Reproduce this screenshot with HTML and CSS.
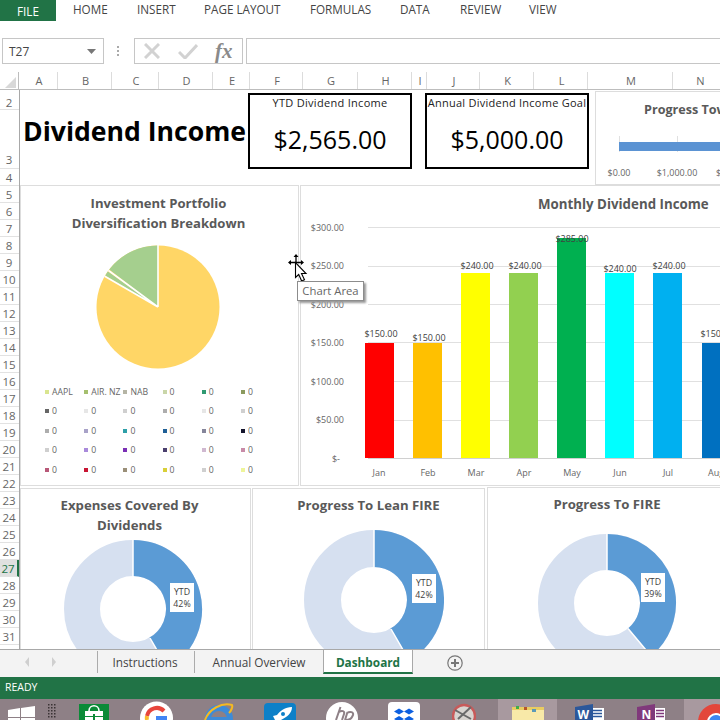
FILE: index.html
```html
<!DOCTYPE html>
<html lang="en">
<head>
<meta charset="utf-8">
<title>Dividend Income Dashboard</title>
<link rel="stylesheet" href="styles.css">
</head>
<body>
<div class="app">
  <nav class="ribbon">
    <span class="file-tab">FILE</span>
    <span class="rtab t-home">HOME</span>
    <span class="rtab t-insert">INSERT</span>
    <span class="rtab t-page">PAGE LAYOUT</span>
    <span class="rtab t-form">FORMULAS</span>
    <span class="rtab t-data">DATA</span>
    <span class="rtab t-review">REVIEW</span>
    <span class="rtab t-view">VIEW</span>
  </nav>
  <div class="formula-bar">
    <div class="name-box"><span>T27</span><svg class="caret" width="9" height="5" viewBox="0 0 9 5"><path d="M0 0h9L4.500 5z"/></svg></div>
    <svg class="grip" width="3" height="12" viewBox="0 0 3 12"><path d="M0 1h2v2H0zM0 5h2v2H0zM0 9h2v2H0z"/></svg>
    <div class="fx-box">
      <svg width="16" height="16" viewBox="0 0 16 16"><path d="M1 1l14 14M15 1L1 15" class="fx-x"/></svg>
      <svg width="20" height="16" viewBox="0 0 20 16"><path d="M1 9l6 6L19 2" class="fx-x"/></svg>
      <span class="fx-label">fx</span>
    </div>
    <div class="fx-input"></div>
  </div>
  <div class="col-head">
    <div class="corner"><svg width="11" height="11" viewBox="0 0 11 11"><path d="M11 0v11H0z"/></svg></div>
    <span class="col c-a">A</span><span class="col c-b">B</span><span class="col c-c">C</span><span class="col c-d">D</span><span class="col c-e">E</span><span class="col c-f">F</span><span class="col c-g">G</span><span class="col c-h">H</span><span class="col c-i">I</span><span class="col c-j">J</span><span class="col c-k">K</span><span class="col c-l">L</span><span class="col c-m">M</span><span class="col c-n">N</span>
  </div>
  <div class="sheet-wrap">
    <div class="row-head">
      <span class="row r-2">2</span><span class="row r-3">3</span><span class="row">4</span><span class="row">5</span><span class="row">6</span><span class="row">7</span><span class="row">8</span><span class="row">9</span><span class="row">10</span><span class="row">11</span><span class="row">12</span><span class="row">13</span><span class="row">14</span><span class="row">15</span><span class="row">16</span><span class="row">17</span><span class="row">18</span><span class="row">19</span><span class="row">20</span><span class="row">21</span><span class="row">22</span><span class="row">23</span><span class="row">24</span><span class="row">25</span><span class="row">26</span><span class="row sel">27</span><span class="row">28</span><span class="row">29</span><span class="row">30</span><span class="row">31</span>
    </div>
    <main class="canvas">
      <h1 class="main-title">Dividend Income</h1>
      <section class="kpi kpi-ytd"><h2>YTD Dividend Income</h2><p>$2,565.00</p></section>
      <section class="kpi kpi-goal"><h2>Annual Dividend Income Goal</h2><p>$5,000.00</p></section>

      <section class="chart ch-progress">
        <svg width="140" height="94" viewBox="0 0 140 94">
          <text class="ttl ttl-s" x="48" y="22">Progress Towards</text>
          <path class="grid" d="M23.500 44v16M81.500 44v16"/>
          <rect x="23" y="50" width="117" height="9" fill="#5b93d3"/>
          <text class="tick" x="23" y="84" text-anchor="middle">$0.00</text>
          <text class="tick" x="81" y="84" text-anchor="middle">$1,000.00</text>
          <text class="tick" x="120" y="84">$2,000.00</text>
        </svg>
      </section>

      <section class="chart ch-pie">
        <h3>Investment Portfolio<br>Diversification Breakdown</h3>
        <svg class="pie" width="124" height="124" viewBox="-62 -62 124 124">
          <circle r="61.500" fill="#ffd666"/>
          <path d="M0 0L-50.200-35.500A61.500 61.500 0 0 1-52.800-31.500z" fill="#a5cf8e"/>
          <path d="M0 0L-48.700-37.600A61.500 61.500 0 0 1 0-61.500z" fill="#a5cf8e"/>
          <path d="M0 0L-49.500-36.500M0 0L-53.300-30.700M0 0V-62" stroke="#fff" stroke-width="1.600" fill="none"/>
        </svg>
        <ul class="legend">
          <li class="wide"><i class="k1"></i>AAPL</li><li class="wide"><i class="k2"></i>AIR. NZ</li><li class="wide"><i class="k3"></i>NAB</li><li><i class="k4"></i>0</li><li><i class="k5"></i>0</li><li><i class="k6"></i>0</li>
          <li><i class="k7"></i>0</li><li><i class="k8"></i>0</li><li><i class="k9"></i>0</li><li><i class="k10"></i>0</li><li><i class="k8"></i>0</li><li><i class="k9"></i>0</li>
          <li><i class="k10"></i>0</li><li><i class="k11"></i>0</li><li><i class="k12"></i>0</li><li><i class="k13"></i>0</li><li><i class="k14"></i>0</li><li><i class="k15"></i>0</li>
          <li><i class="k9"></i>0</li><li><i class="k16"></i>0</li><li><i class="k17"></i>0</li><li><i class="k18"></i>0</li><li><i class="k19"></i>0</li><li><i class="k20"></i>0</li>
          <li><i class="k21"></i>0</li><li><i class="k22"></i>0</li><li><i class="k23"></i>0</li><li><i class="k24"></i>0</li><li><i class="k9"></i>0</li><li><i class="k25"></i>0</li>
        </ul>
      </section>

      <section class="chart ch-bars">
        <svg width="420" height="300" viewBox="0 0 420 300">
          <text class="ttl" x="237" y="23">Monthly Dividend Income</text>
          <path class="grid" d="M67 41.500H420M67 80.500H420M67 118.500H420M67 156.500H420M67 195.500H420M67 234.500H420"/>
          <path class="axis" d="M67 272.500H420"/>
          <g class="ylab" text-anchor="end">
            <text x="43" y="45">$300.00</text><text x="43" y="83">$250.00</text><text x="43" y="122">$200.00</text><text x="43" y="160">$150.00</text><text x="43" y="199">$100.00</text><text x="43" y="237">$50.00</text><text x="39" y="276">$-</text>
          </g>
          <rect x="64" y="157" width="29" height="115" fill="#ff0000"/>
          <rect x="112" y="157" width="29" height="115" fill="#ffc000"/>
          <rect x="160" y="87" width="29" height="185" fill="#ffff00"/>
          <rect x="208" y="87" width="29" height="185" fill="#92d050"/>
          <rect x="256" y="52" width="29" height="220" fill="#00b050"/>
          <rect x="304" y="87" width="29" height="185" fill="#00ffff"/>
          <rect x="352" y="87" width="29" height="185" fill="#00b0f0"/>
          <rect x="401" y="157" width="29" height="115" fill="#0070c0"/>
          <g class="dlab" text-anchor="middle">
            <text x="80" y="151">$150.00</text><text x="128" y="155">$150.00</text><text x="176" y="83">$240.00</text><text x="224" y="83">$240.00</text><text x="271" y="56">$285.00</text><text x="319" y="86">$240.00</text><text x="368" y="83">$240.00</text><text x="416" y="151">$150.00</text>
          </g>
          <g class="xlab" text-anchor="middle">
            <text x="78" y="290">Jan</text><text x="127" y="290">Feb</text><text x="175" y="290">Mar</text><text x="223" y="290">Apr</text><text x="271" y="290">May</text><text x="319" y="290">Jun</text><text x="367" y="290">Jul</text><text x="415" y="290">Aug</text>
          </g>
        </svg>
      </section>

      <section class="chart ch-d1">
        <h3>Expenses Covered By<br>Dividends</h3>
        <svg class="donut d-a" width="140" height="140" viewBox="-70 -70 140 140">
          <circle r="51" class="ring-bg"/>
          <path class="ring-fg" d="M0-51A51 51 0 0 1 25.500 44.200"/>
          <path class="ring-gap" d="M0-70V-33M17 29L36 62"/>
        </svg>
        <div class="tag t-d1">YTD<br>42%</div>
      </section>
      <section class="chart ch-d2">
        <h3>Progress To Lean FIRE</h3>
        <svg class="donut d-b" width="140" height="140" viewBox="-70 -70 140 140">
          <circle r="51.500" class="ring-bg"/>
          <path class="ring-fg" d="M0-51.500A51.500 51.500 0 0 1 25.700 44.600"/>
          <path class="ring-gap" d="M0-70V-33M17 29L36 62"/>
        </svg>
        <div class="tag t-d2">YTD<br>42%</div>
      </section>
      <section class="chart ch-d3">
        <h3>Progress To FIRE</h3>
        <svg class="donut d-c" width="140" height="140" viewBox="-70 -70 140 140">
          <circle r="51" class="ring-bg"/>
          <path class="ring-fg" d="M0-51A51 51 0 0 1 32.500 39.300"/>
          <path class="ring-gap" d="M0-70V-33M21 25.400L44 53"/>
        </svg>
        <div class="tag t-d3">YTD<br>39%</div>
      </section>

      <svg class="cursor" width="20" height="30" viewBox="0 0 20 30">
        <path d="M8 1.500V8M1.500 8.500H14" stroke="#000" stroke-width="1.300" fill="none"/>
        <path d="M8 0l2.500 3h-5zM0 8.500L3 6v5zM16 8.500L13 6v5z" fill="#000"/>
        <path d="M7.500 8.500v15l3.200-3 3 6.500 2.800-1.300-3-6.200H18z" fill="#fff" stroke="#000" stroke-width="1.100"/>
      </svg>
      <div class="tooltip">Chart Area</div>
    </main>
  </div>
  <div class="sheet-tabs">
    <svg class="nav-arrows" width="32" height="12" viewBox="0 0 32 12"><path d="M5 1L1 6l4 5zM28 1l4 5-4 5z"/></svg>
    <span class="stab s-first">Instructions</span>
    <span class="stab s-second">Annual Overview</span>
    <span class="stab active">Dashboard</span>
    <svg class="add" width="16" height="16" viewBox="0 0 16 16"><circle cx="8" cy="8" r="7.200"/><path d="M8 4v8M4 8h8"/></svg>
  </div>
  <footer class="status">READY</footer>
  <div class="taskbar">
    <svg class="w-win" width="40" height="21" viewBox="0 0 40 21"><path fill="#fff" d="M8 11l12-2v9H8zM21 9l14-2v11H21zM8 19h12v2H8zM21 19h14v2H21z"/></svg>
    <svg class="w-search" width="9" height="21" viewBox="0 0 9 21"><path fill="#3a3335" d="M1 5h1.500v1.500H1zM4 5h1.500v1.500H4zM7 5h1.500v1.500H7zM1 8h1.500v1.500H1zM4 8h1.500v1.500H4zM7 8h1.500v1.500H7zM1 11h1.500v1.500H1zM4 11h1.500v1.500H4zM7 11h1.500v1.500H7zM1 14h1.500v1.500H1zM4 14h1.500v1.500H4zM7 14h1.500v1.500H7zM1 17h1.500v1.500H1zM4 17h1.500v1.500H4zM7 17h1.500v1.500H7z"/></svg>
    <svg class="w-store" width="30" height="21" viewBox="0 0 30 21"><path fill="#0b8a37" d="M0 5h30v16H0z"/><path fill="none" stroke="#fff" stroke-width="1.600" d="M10 12c0-7 10-7 10 0"/><path fill="#fff" d="M6 12h18v9H6z"/><path fill="#0b8a37" d="M14 15h2v6h-2zM6 17h18v1H6z"/></svg>
    <svg class="w-g" width="33" height="21" viewBox="0 0 33 21"><circle cx="16.500" cy="19" r="16.500" fill="#fff"/><path d="M7 17a10 10 0 0 1 17-5" fill="none" stroke="#e8453c" stroke-width="4"/><path d="M7 17a10 10 0 0 0 0 4" fill="none" stroke="#f9bb2d" stroke-width="4"/><path fill="#4285f4" d="M16 17h11v4H16z"/></svg>
    <svg class="w-ie" width="30" height="21" viewBox="0 0 30 21"><circle cx="15" cy="20" r="11" fill="none" stroke="#3d8bd8" stroke-width="6"/><path fill="#3d8bd8" d="M6 18h18v3H6z"/><path d="M1 21C5 10 18 3 28 6c1 2-1 6-3 8" fill="none" stroke="#f5b921" stroke-width="2"/></svg>
    <svg class="w-rocket" width="32" height="21" viewBox="0 0 32 21"><path fill="#0d80c8" d="M4 4h24a4 4 0 0 1 4 4v13H0V8a4 4 0 0 1 4-4z"/><path fill="#fff" d="M28 8c-7 0-12 4-15 8l-4 1 2 4h6c6-3 11-7 11-13z"/><circle cx="19" cy="15" r="2" fill="#0d80c8"/></svg>
    <svg class="w-hp" width="32" height="21" viewBox="0 0 32 21"><circle cx="16" cy="19" r="16" fill="#fff"/><path d="M14.500 8L10 21M13 13c3-2 6-1 5 2l-2 6M21.500 13L19 21M21 14c3-2 7-1 6 2l-1 2c-1 2-3 3-6 3" stroke="#8e8086" stroke-width="2" fill="none"/></svg>
    <svg class="w-drop" width="32" height="21" viewBox="0 0 32 21"><path fill="#fff" d="M4 3h24a4 4 0 0 1 4 4v14H0V7a4 4 0 0 1 4-4z"/><path fill="#0d60e0" d="M11 9.500l5 3-5 3-5-3zM21 9.500l5 3-5 3-5-3zM11 17l5 3-5 3-5-3zM21 17l5 3-5 3-5-3z"/></svg>
    <svg class="w-snip" width="24" height="21" viewBox="0 0 24 21"><circle cx="12" cy="17" r="11" fill="#d8d4d0" stroke="#c85a5a" stroke-width="2.500"/><path d="M3 11l16 9M6 20l13-12" stroke="#6a6a6a" stroke-width="2"/></svg>
    <div class="cell-on c-folder"><svg width="32" height="21" viewBox="0 0 32 21"><path fill="#e9cc62" d="M0 8h32v13H0z"/><path fill="#f8e9a8" d="M0 11h32v10H0z"/><path fill="#3fae49" d="M4 7h3v3H4z"/><path fill="#b8562a" d="M12 8h3v3h-3z"/><path fill="#5b9ab8" d="M20 10h4v3h-4z"/></svg></div>
    <svg class="w-word" width="30" height="21" viewBox="0 0 30 21"><path fill="#fff" d="M17 9h12v12H17z"/><path stroke="#2b579a" stroke-width="1.300" d="M18 11.500h9M18 14.500h9M18 17.500h9"/><path fill="#2b579a" d="M0 8l18-3v16H0z"/><text x="2.500" y="20" class="ico-t">W</text></svg>
    <svg class="w-note" width="30" height="21" viewBox="0 0 30 21"><path fill="#fff" d="M17 9h11v12H17z"/><path stroke="#80397b" stroke-width="1.300" d="M19 11.500h8M19 14.500h8M19 17.500h8"/><path fill="#80397b" d="M0 8l18-3v16H0z"/><text x="4.500" y="20" class="ico-t">N</text></svg>
    <div class="cell-on c-chrome"><svg class="chrome" width="36" height="21" viewBox="0 0 36 21"><circle cx="32" cy="23" r="18" fill="#e3463b"/><path d="M32 23L15 21v20h17z" fill="#2fa24b"/><circle cx="32" cy="23" r="9" fill="#fff"/><circle cx="32" cy="23" r="7" fill="#3e86f0"/></svg></div>
  </div>
</div>
</body>
</html>
```
FILE: styles.css
```css
* { box-sizing: border-box; }
html, body { margin: 0; padding: 0; height: 720px; overflow: hidden; background: #fff; }
body { font-family: "Open Sans", "Noto Sans", sans-serif; color: #444; }
.app { width: 720px; height: 720px; display: flex; flex-direction: column; overflow: hidden; }

/* ribbon */
.ribbon { position: relative; height: 38px; flex: none; font-size: 11.700px; color: #444; }
.file-tab { position: absolute; left: 0; top: 0; width: 56px; height: 21px; background: #217346; color: #fff; display: flex; align-items: center; justify-content: center; }
.rtab { position: absolute; top: 0; height: 18px; line-height: 18px; }
.t-home { left: 73px; } .t-insert { left: 137px; } .t-page { left: 204px; } .t-form { left: 310px; } .t-data { left: 400px; } .t-review { left: 460px; } .t-view { left: 529px; }

/* formula bar */
.formula-bar { height: 26px; flex: none; display: flex; align-items: stretch; border-bottom: 0; }
.name-box { width: 102px; margin-left: 2px; border: 1px solid #c6c6c6; display: flex; align-items: center; justify-content: space-between; padding: 0 7px 0 6px; font-size: 12px; color: #444; background: #fff; }
.caret { fill: #777; }
.grip { align-self: center; margin-left: 13px; margin-right: 14px; fill: #aaa; }
.fx-box { width: 109px; border: 1px solid #c6c6c6; display: flex; align-items: center; gap: 18px; padding-left: 9px; }
.fx-x { fill: none; stroke: #d2d2d2; stroke-width: 3; }
.fx-label { font-family: "Liberation Serif", serif; font-style: italic; font-weight: 700; font-size: 21px; color: #8a8a8a; margin-left: -1px; }
.fx-input { flex: 1; margin-left: 3px; border-top: 1px solid #c6c6c6; border-bottom: 1px solid #c6c6c6; border-left: 1px solid #c6c6c6; }

/* column headers */
.col-head { height: 26px; padding-top: 8px; flex: none; display: flex; font-size: 11px; color: #666; border-bottom: 1px solid #bdbdbd; overflow: hidden; }
.corner { width: 19px; flex: none; border-right: 1px solid #bdbdbd; display: flex; align-items: flex-end; justify-content: flex-end; padding: 0 2px 1px 0; fill: #d8d8d8; }
.col { flex: none; height: 17px; line-height: 17px; text-align: center; border-right: 1px solid #dcdcdc; padding-left: 2px; }
.c-a { width: 39px; } .c-b { width: 54px; } .c-c { width: 47px; } .c-d { width: 54px; } .c-e { width: 37px; } .c-f { width: 53px; } .c-g { width: 55px; } .c-h { width: 54px; } .c-i { width: 15px; } .c-j { width: 53px; } .c-k { width: 54px; } .c-l { width: 54px; } .c-m { width: 85px; } .c-n { width: 54px; }

/* sheet */
.sheet-wrap { flex: none; height: 559px; display: flex; overflow: hidden; }
.row-head { width: 20px; flex: none; border-right: 1px solid #a8a8a8; display: flex; flex-direction: column; font-size: 11.500px; color: #666; }
.row { flex: none; height: 17px; line-height: 17px; text-align: center; border-bottom: 1px solid #e2e2e2; padding-right: 1px; }
.r-2 { height: 20px; line-height: 26px; }
.r-3 { height: 59px; line-height: 100px; }
.sel { background: #e0e0e0; color: #217346; border-right: 2px solid #217346; }
.canvas { flex: 1; position: relative; overflow: hidden; background: #fff; }

.main-title { position: absolute; left: 3px; top: 23px; margin: 0; font-size: 26.600px; font-weight: 700; color: #000; white-space: nowrap; line-height: 36px; }
.kpi { position: absolute; top: 3px; height: 76px; border: 2px solid #000; background: #fff; text-align: center; color: #000; overflow: hidden; }
.kpi h2 { margin: 0; font-size: 11px; font-weight: 400; line-height: 15px; letter-spacing: .3px; white-space: nowrap; color: #222; }
.kpi-goal h2 { letter-spacing: .25px; }
.kpi p { margin: 12px 0 0; font-size: 25px; line-height: 34px; color: #000; }
.kpi-ytd { left: 228px; width: 164px; }
.kpi-goal { left: 405px; width: 164px; }

.chart { position: absolute; background: #fff; box-shadow: 0 0 0 1px #dddddd; }
.chart h3 { margin: 0; font-size: 13.200px; line-height: 20px; font-weight: 700; color: #595959; text-align: center; }
.chart svg { display: block; }
.ttl { font-family: "Open Sans", sans-serif; font-size: 13.300px; font-weight: 700; fill: #595959; }
.ttl-s { font-size: 12.600px; }
.grid { stroke: #e0e0e0; stroke-width: 1; fill: none; }
.axis { stroke: #d0d0d0; stroke-width: 1; fill: none; }
.tick { font-size: 9px; fill: #666; }
.ylab text, .xlab text { font-size: 9px; fill: #666; }
.dlab text { font-size: 9px; fill: #404040; }

.ch-progress { left: 576px; top: 2px; width: 144px; height: 92px; overflow: hidden; }
.ch-pie { left: 1px; top: 96px; width: 277px; height: 299px; padding-top: 7px; }
.ch-pie h3 { font-size: 13.100px; padding-right: 2px; }
.pie { margin: 12px 0 0 75px; }
.legend { list-style: none; margin: 13px 0 0 24px; padding: 0; display: grid; grid-template-columns: repeat(6, 39.200px); grid-auto-rows: 19.500px; font-size: 8.700px; color: #666; }
.legend li { display: flex; align-items: center; gap: 2px; white-space: nowrap; height: 19px; }
.legend i { width: 4px; height: 4px; flex: none; margin-right: 1px; }
.k1 { background: #d9e58f; } .k2 { background: #a5bf6e; } .k3 { background: #b5b5a5; } .k4 { background: #c9d6a8; } .k5 { background: #2f9a72; } .k6 { background: #8b9a5e; } .k7 { background: #666; } .k8 { background: #e6e6e6; } .k9 { background: #cfcfcf; } .k10 { background: #adadad; } .k11 { background: #a8a2c8; } .k12 { background: #2d9fa8; } .k13 { background: #1f5f96; } .k14 { background: #85859a; } .k15 { background: #14142c; } .k16 { background: #a98adb; } .k17 { background: #7a2fb5; } .k18 { background: #4a3f6e; } .k19 { background: #d0b8d0; } .k20 { background: #c88ba8; } .k21 { background: #b85878; } .k22 { background: #c81432; } .k23 { background: #9a8f78; } .k24 { background: #d8cf38; } .k25 { background: #eef59a; }

.ch-bars { left: 281px; top: 96px; width: 439px; height: 299px; overflow: hidden; }
.ch-d1, .ch-d2, .ch-d3 { top: 399px; height: 170px; overflow: hidden; padding-top: 6px; }
.ch-d1 { left: 1px; width: 229px; }
.ch-d1 h3 { padding-right: 12px; }
.ch-d2 { left: 233px; width: 231px; }
.ch-d3 { left: 468px; width: 252px; top: 398px; }
.ch-d3 h3 { padding-right: 14px; }
.donut { position: absolute; }
.ring-bg { fill: none; stroke: #d6e0f0; stroke-width: 36; }
.ring-fg { fill: none; stroke: #5b9bd5; stroke-width: 36; }
.ring-gap { stroke: #fff; stroke-width: 1.500; fill: none; }
.d-a { left: 42px; top: 50px; }
.d-b { left: 51px; top: 41px; }
.d-b .ring-bg, .d-b .ring-fg { stroke-width: 37; }
.d-c { left: 49px; top: 45px; }
.tag { position: absolute; background: #fff; font-size: 8.800px; line-height: 12px; text-align: center; color: #404040; padding-top: 3px; width: 24px; height: 29px; }
.t-d1 { left: 149px; top: 94px; }
.t-d2 { left: 159px; top: 85px; }
.t-d3 { left: 153px; top: 85px; }

.cursor { position: absolute; left: 268px; top: 164px; }
.tooltip { position: absolute; left: 277px; top: 191px; width: 67px; height: 20px; line-height: 18px; border: 1px solid #8c8c8c; background: #fff; font-size: 11.300px; color: #666; text-align: center; box-shadow: 2px 2px 2px #999; white-space: nowrap; }

/* sheet tabs */
.sheet-tabs { height: 28px; flex: none; background: #f3f3f3; border-top: 1px solid #a8a8a8; display: flex; align-items: flex-start; font-size: 11.800px; color: #444; }
.nav-arrows { margin-left: 24px; margin-right: 41px; margin-top: 6px; fill: #cfcfcf; }
.stab { display: flex; align-items: center; justify-content: center; border-left: 1px solid #ababab; margin-top: 1px; height: 22px; }
.s-first { width: 97px; padding-right: 2px; }
.s-second { width: 129px; }
.active { width: 90px; margin-top: 0; height: 24px; padding-top: 1px; background: #fff; color: #217346; font-weight: 700; border-left: 1px solid #a8a8a8; border-right: 1px solid #a8a8a8; border-bottom: 2px solid #217346; }
.add { margin-left: 34px; margin-top: 5px; fill: none; stroke: #777; stroke-width: 1.200; }
.add path { stroke-width: 2; }

.status { height: 22px; flex: none; background: #217346; color: #fff; font-size: 10.500px; line-height: 21px; padding-left: 5px; }

/* taskbar */
.taskbar { height: 21px; flex: none; background: #8e8086; display: flex; align-items: flex-start; overflow: hidden; }
.taskbar svg { display: block; flex: none; }
.w-search { margin-left: 7px; }
.w-store { margin-left: 23px; }
.w-g { margin-left: 31px; }
.w-ie { margin-left: 31px; }
.w-rocket { margin-left: 30px; }
.w-hp { margin-left: 30px; }
.w-drop { margin-left: 30px; }
.w-snip { margin-left: 32px; }
.cell-on { height: 21px; background: #a8999f; display: flex; flex: none; }
.c-folder { width: 59px; margin-left: 22px; justify-content: center; }
.w-word { margin-left: 18px; }
.w-note { margin-left: 32px; }
.c-chrome { width: 36px; margin-left: 17px; overflow: hidden; }
.ico-t { font-family: "Open Sans", sans-serif; font-size: 12px; font-weight: 700; fill: #fff; }
```
